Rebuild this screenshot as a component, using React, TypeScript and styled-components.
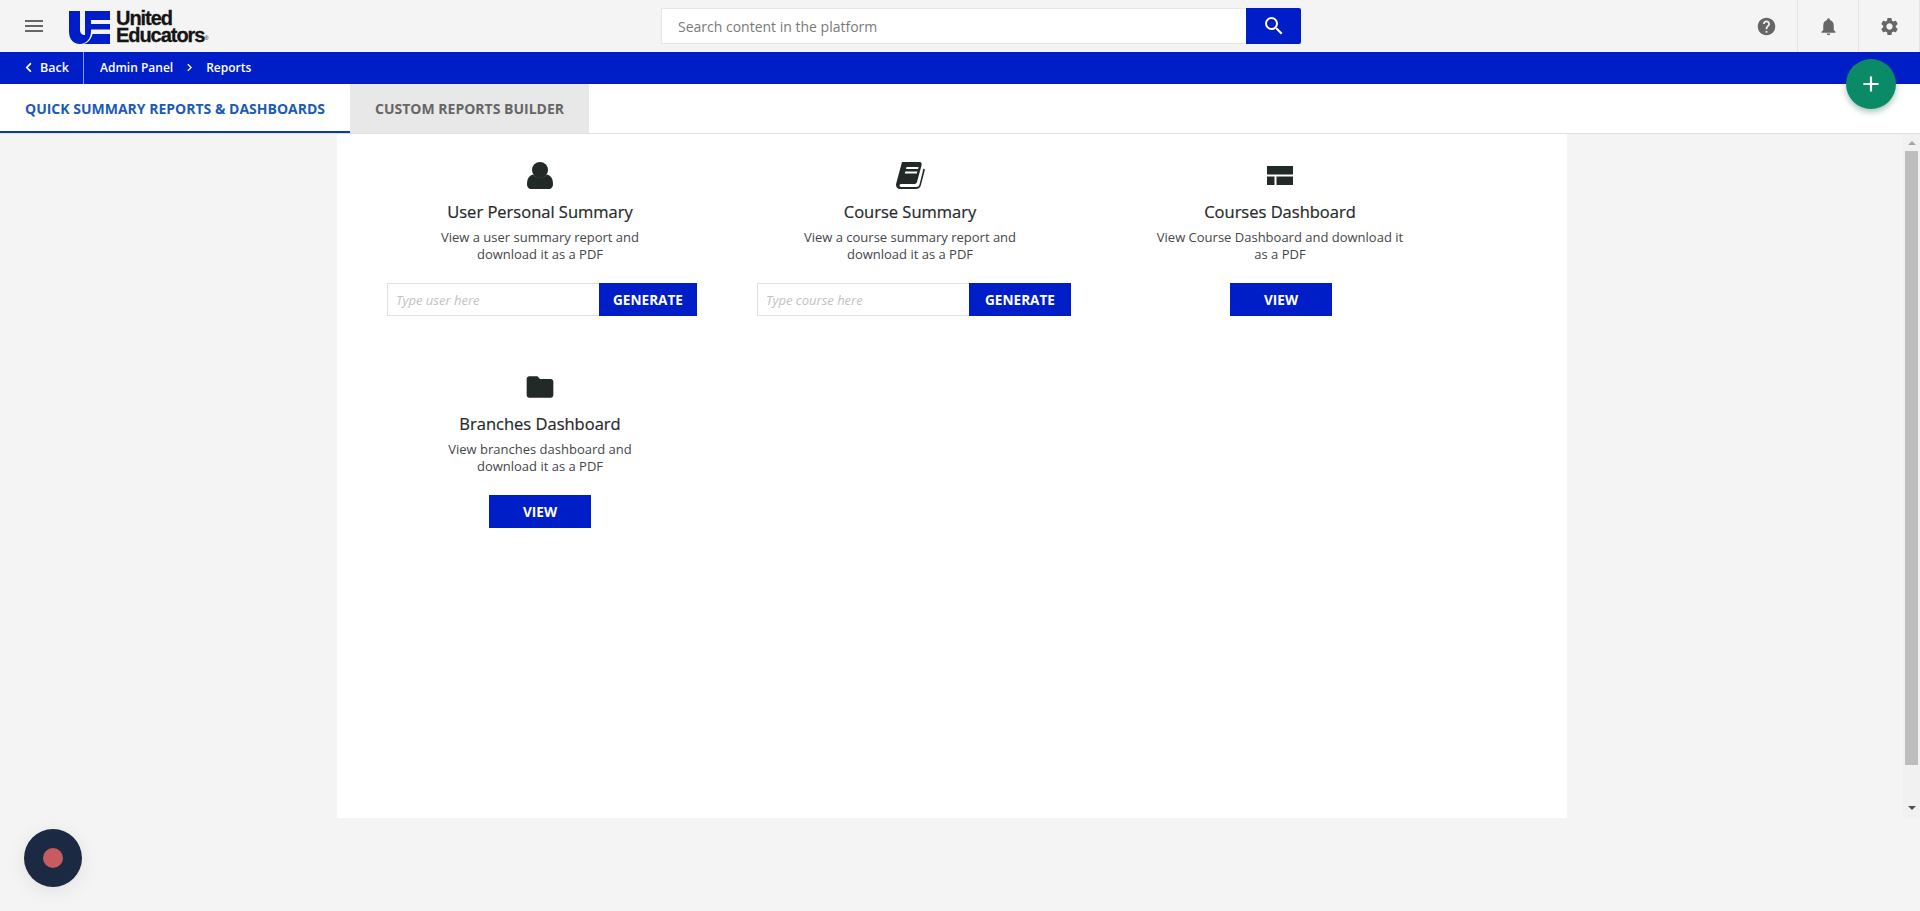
import React from "react";
import styled, { createGlobalStyle } from "styled-components";
import { MdMenu, MdSearch, MdHelp, MdNotifications, MdSettings, MdAdd, MdFolder, MdChevronRight } from "react-icons/md";
import { FaChevronLeft } from "react-icons/fa";

const Global = createGlobalStyle`
  html, body { margin: 0; padding: 0; height: 100%; overflow: hidden; background: #f4f4f4; }
  * { box-sizing: border-box; }
  body { font-family: "Open Sans", "Liberation Sans", sans-serif; color: #333; }
`;

const Shell = styled.div`
  width: 1920px; height: 911px; display: flex; flex-direction: column;
  position: relative; overflow: hidden; background: #f4f4f4;
`;
const TopBar = styled.header`
  height: 52px; display: grid; grid-template-columns: 661px 640px 1fr; align-items: center; background: #f4f4f4;
`;
const Brand = styled.div`display: flex; align-items: center; height: 52px;`;
const MenuButton = styled.div`
  width: 69px; padding-left: 22px; display: flex; color: #666; font-size: 24px;
`;
const LogoText = styled.div`
  margin-left: 6px; margin-top: 1px; font-family: "Liberation Sans", Arial, sans-serif; font-weight: 700;
  font-size: 20px; line-height: 17px; letter-spacing: -1.05px; color: #151515;
  -webkit-text-stroke: 0.3px #151515;
  sup { font-size: 6px; font-weight: 400; letter-spacing: 0; line-height: 0; vertical-align: 2px; -webkit-text-stroke: 0; }
`;
const Search = styled.div`display: flex; height: 36px; width: 640px;`;
const SearchField = styled.div`
  flex: 1; background: #fff; border: 1px solid #e6e6e6; border-right: 0; padding-left: 16px;
  display: flex; align-items: center; font-size: 14px; color: #7a7a7a;
`;
const SearchButton = styled.div`
  width: 55px; background: #001ec8; color: #fff; border-radius: 0 2px 2px 0;
  display: flex; align-items: center; justify-content: center; font-size: 24px;
`;
const Tools = styled.div`display: flex; justify-content: flex-end; height: 52px;`;
const Tool = styled.div<{ $line?: boolean; $end?: boolean }>`
  width: ${p => (p.$end ? 62 : 61)}px; display: flex; align-items: center; justify-content: center; font-size: 21px; color: #666;
  border-left: ${p => (p.$line ? "1px solid #e4e4e4" : "0")};
  border-right: ${p => (p.$end ? "1px solid #e4e4e4" : "0")};
`;
const CrumbBar = styled.nav`
  height: 32px; background: #001ec8; color: #fff; display: flex; align-items: center;
  font-size: 12px; font-weight: 600;
`;
const Back = styled.div`
  width: 84px; height: 32px; padding: 0 0 2px 23px; display: flex; align-items: center; gap: 6px;
  border-right: 1px solid #8a9ae6; font-size: 12.5px;
`;
const Crumbs = styled.div`
  display: flex; align-items: center; padding: 0 0 2px 16px;
  svg { margin: 0 9px; font-size: 15px; }
`;
const TabBar = styled.div`
  height: 50px; background: #fff; border-bottom: 1px solid #e0e0e0; display: flex; align-items: stretch;
`;
const Tab = styled.div<{ $active?: boolean }>`
  padding: 0 25px; display: flex; align-items: center; font-size: 14px; font-weight: 700;
  color: ${p => (p.$active ? "#1a5bb8" : "#666")};
  background: ${p => (p.$active ? "#fff" : "#e8e8e8")};
  box-shadow: ${p => (p.$active ? "inset 0 -2px 0 #0a3aa8" : "none")};
`;
const Body = styled.main`flex: 1; display: flex; position: relative;`;
const Panel = styled.section`
  margin-left: 337px; width: 1230px; height: 684px; background: #fff; padding-left: 18px;
  display: grid; grid-template-columns: repeat(3, 370px); grid-auto-rows: 212px; align-content: start;
`;
const Card = styled.article`
  padding-top: 26px; display: flex; flex-direction: column; align-items: center; text-align: center;
`;
const IconSlot = styled.div`
  height: 30px; width: 40px; display: flex; align-items: center; justify-content: center; color: #222a27;
`;
const Title = styled.h3`
  margin: 10px 0 0; font-size: 16.5px; line-height: 24px; font-weight: 500; color: #26292b;
  -webkit-text-stroke: 0.2px #26292b;
`;
const Desc = styled.p<{ $w: number }>`
  margin: 5px 0 0; font-size: 13px; line-height: 17px; width: ${p => p.$w}px; color: #444749; font-weight: 400;
`;
const Form = styled.div<{ $shift: number }>`
  margin: 20px 0 0 ${p => p.$shift}px; display: flex; height: 33px;
`;
const Input = styled.div<{ $w: number }>`
  width: ${p => p.$w}px; background: #fff; border: 1px solid #e2e2e2; border-right: 0; padding-left: 8px;
  display: flex; align-items: center; font-size: 13px; font-style: italic; color: #c2c2c2; text-align: left;
`;
const ActionButton = styled.div<{ $w: number }>`
  width: ${p => p.$w}px; height: 33px; background: #001ec8; color: #fff; display: flex; align-items: center;
  justify-content: center; font-size: 13.6px; font-weight: 700;
`;
const Scrollbar = styled.div`
  position: absolute; right: 0; top: 0; width: 17px; height: 684px; background: #f1f1f1;
  display: flex; flex-direction: column; align-items: center;
`;
const Arrow = styled.div<{ $down?: boolean }>`
  width: 0; height: 0; border-left: 4px solid transparent; border-right: 4px solid transparent;
  ${p => (p.$down ? "border-top: 4px solid #505050; margin-top: auto; margin-bottom: 8px;" : "border-bottom: 4px solid #a3a3a3; margin-top: 7px;")}
`;
const Thumb = styled.div`width: 13px; height: 614px; margin-top: 6px; background: #bdbdbd;`;
const Fab = styled.div`
  position: absolute; left: 1846px; top: 59px; width: 50px; height: 50px; border-radius: 50%;
  background: #0b8a68; color: #fff; display: flex; align-items: center; justify-content: center; font-size: 26px;
  box-shadow: 0 3px 6px rgba(0, 80, 60, .35);
`;
const Record = styled.div`
  position: absolute; left: 24px; top: 829px; width: 58px; height: 58px; border-radius: 50%;
  background: #1b2a42; display: flex; align-items: center; justify-content: center;
  box-shadow: 0 4px 20px rgba(0,0,0,.08);
`;
const RecordDot = styled.div`width: 20px; height: 20px; border-radius: 50%; background: #c65c60;`;
const MarkSvg = styled.svg`flex: none; margin-top: 2px;`;

const Mark = () => (
  <MarkSvg width="41" height="33" viewBox="0 0 41 33" fill="#001ec8" aria-hidden="true">
    <path d="M0 0H11V19C11 22 13 24 16 24V0H22V20C22 28 17 33 11 33C4 33 0 28 0 20Z" />
    <rect x="16" y="0" width="25" height="9" />
    <rect x="22" y="13" width="19" height="5.500" />
    <path d="M23.500 23H41V33H14.500C19 32 22.500 28 23.500 23Z" />
  </MarkSvg>
);

const UserIcon = () => (
  <svg width="26" height="27" viewBox="0 0 26 27" fill="currentColor" aria-hidden="true">
    <circle cx="13" cy="8" r="8" />
    <path d="M0 22C0 17 2 13.500 6 12.500A9.700 9.700 0 0 0 20 12.500C24 13.500 26 17 26 22C26 25.500 24 27 22 27H4C2 27 0 25.500 0 22Z" />
  </svg>
);

const BookIcon = () => (
  <svg width="29" height="27" viewBox="0 0 29 27" fill="currentColor" aria-hidden="true">
    <path fillRule="evenodd" d="M6 0H23.500C25.500 0 26 1.500 25.500 3.500L21 20C20.500 21.500 19.500 22 18 22H5C3 22 3 25 5 25H20.500C22 25 23 24.200 23.500 22.500L27.500 6.500L29 7.500L24.800 23.500C24.200 25.700 22.500 27 20 27H4C1.500 27 0 25 0 23C0 22.300 0.200 21.500 0.400 20.800ZM10.500 5L10 7H22L22.500 5ZM9.300 9.500L8.800 11.500H20.800L21.300 9.500Z" />
  </svg>
);

const LayoutIcon = () => (
  <svg width="26" height="19" viewBox="0 0 26 19" fill="currentColor" aria-hidden="true">
    <rect width="26" height="8.500" />
    <rect y="10.500" width="7.500" height="8.500" />
    <rect x="9.500" y="10.500" width="16.500" height="8.500" />
  </svg>
);

const cards = [
  { title: "User Personal Summary", desc: "View a user summary report and download it as a PDF", dw: 260, icon: <UserIcon />, ph: "Type user here", iw: 212, bw: 98, shift: 4 },
  { title: "Course Summary", desc: "View a course summary report and download it as a PDF", dw: 260, icon: <BookIcon />, ph: "Type course here", iw: 212, bw: 102, shift: 8 },
  { title: "Courses Dashboard", desc: "View Course Dashboard and download it as a PDF", dw: 260, icon: <LayoutIcon />, label: "VIEW", bw: 102, shift: 2 },
  { title: "Branches Dashboard", desc: "View branches dashboard and download it as a PDF", dw: 220, icon: <MdFolder size={32} />, label: "VIEW", bw: 102, shift: 0 },
];

export default function App() {
  return (
    <Shell>
      <Global />
      <TopBar>
        <Brand>
          <MenuButton><MdMenu /></MenuButton>
          <Mark />
          <LogoText>United<br />Educators<sup>®</sup></LogoText>
        </Brand>
        <Search>
          <SearchField>Search content in the platform</SearchField>
          <SearchButton><MdSearch /></SearchButton>
        </Search>
        <Tools>
          <Tool><MdHelp /></Tool>
          <Tool $line><MdNotifications /></Tool>
          <Tool $line $end><MdSettings /></Tool>
        </Tools>
      </TopBar>
      <CrumbBar>
        <Back><FaChevronLeft size={11} />Back</Back>
        <Crumbs>Admin Panel<MdChevronRight />Reports</Crumbs>
      </CrumbBar>
      <TabBar>
        <Tab $active>QUICK SUMMARY REPORTS &amp; DASHBOARDS</Tab>
        <Tab>CUSTOM REPORTS BUILDER</Tab>
      </TabBar>
      <Body>
        <Panel>
          {cards.map(c => (
            <Card key={c.title}>
              <IconSlot>{c.icon}</IconSlot>
              <Title>{c.title}</Title>
              <Desc $w={c.dw}>{c.desc}</Desc>
              <Form $shift={c.shift}>
                {c.ph && <Input $w={c.iw!}>{c.ph}</Input>}
                <ActionButton $w={c.bw}>{c.label ?? "GENERATE"}</ActionButton>
              </Form>
            </Card>
          ))}
        </Panel>
        <Scrollbar>
          <Arrow />
          <Thumb />
          <Arrow $down />
        </Scrollbar>
      </Body>
      <Fab><MdAdd /></Fab>
      <Record><RecordDot /></Record>
    </Shell>
  );
}
